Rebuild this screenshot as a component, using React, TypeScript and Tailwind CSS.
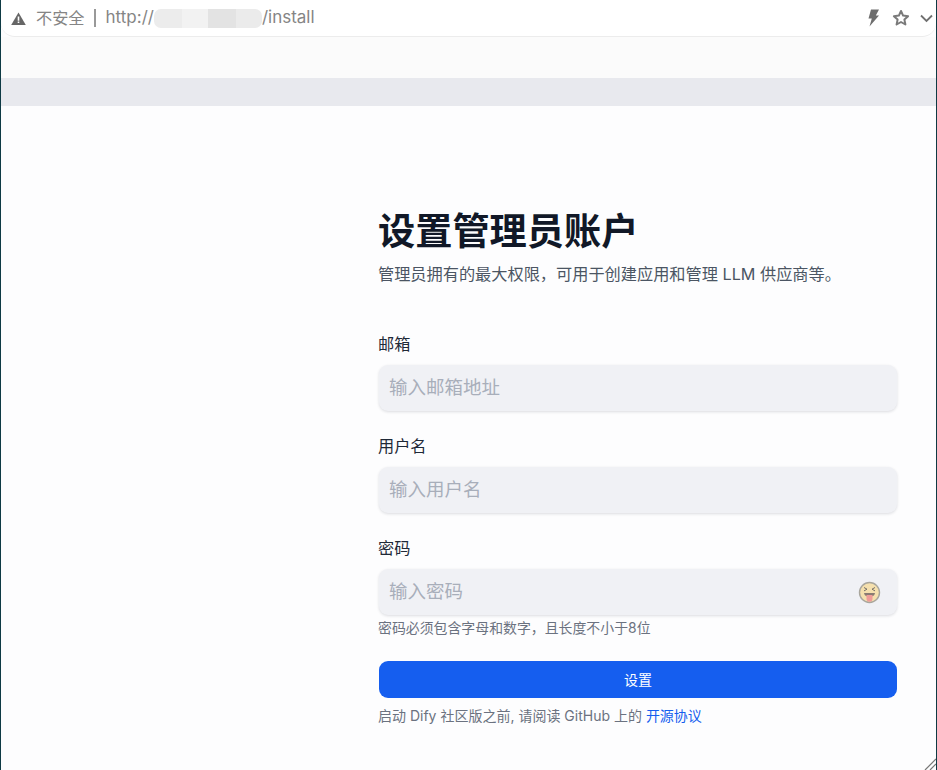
const font = { fontFamily: '"Inter","Noto Sans CJK SC",sans-serif' };

function Field({ label, placeholder, children }: { label: string; placeholder: string; children?: React.ReactNode }) {
  return (
    <div className="flex flex-col">
      <div className="h-[20px] flex items-center text-[16.2px] text-[#1f2937]">{label}</div>
      <div className="mt-[11px] ml-[1px] h-[46px] rounded-[9px] bg-[#f0f1f5] shadow-[0_1px_3px_rgba(16,24,40,0.14)] flex items-center justify-between pl-[10px] pr-[16px]">
        <span className="text-[18.5px] text-[#a8aeba]">{placeholder}</span>
        {children}
      </div>
    </div>
  );
}

function Emoji() {
  return (
    <svg width="23" height="23" viewBox="0 0 23 23" aria-hidden="true">
      <circle cx="11.5" cy="11.5" r="10" fill="#f5e0ae" stroke="#a9a69d" strokeWidth="1.4" />
      <path d="M6 6.500l3 1.700-3 1.700M17 6.500l-3 1.700 3 1.700" fill="none" stroke="#77716a" strokeWidth="1" />
      <path d="M6 12h11c-.3 1.800-1.400 2.800-2.500 3.300h-6C7.400 14.800 6.300 13.800 6 12z" fill="#8a7b72" />
      <path d="M8.500 14h6v3.800a3 3 0 0 1-6 0z" fill="#ef9c98" />
    </svg>
  );
}

export default function App() {
  return (
    <div style={font} className="w-[937px] h-[770px] overflow-hidden relative flex flex-col bg-[#fdfdfe] border-x border-[#0e3a44]">
      <div className="h-[37px] bg-white rounded-b-[14px] border-b border-[#ececec] flex items-center shrink-0 text-[#858585]">
        <svg className="ml-[10px]" width="15" height="13" viewBox="0 0 15 13" aria-hidden="true">
          <path d="M7.500 0.500L14.800 13H0.200z" fill="#666" />
          <path d="M6.700 4.500h1.600v4.300H6.700zM6.700 9.600h1.600v1.500H6.700z" fill="#fff" />
        </svg>
        <span className="ml-[10px] text-[16.2px]">不安全</span>
        <span className="ml-[9px] w-[2px] h-[18px] bg-[#999]" />
        <span className="ml-[10px] text-[17px]">http://</span>
        <span className="flex h-[19px] w-[108px] rounded-[7px] overflow-hidden">
          <span className="w-[28px] bg-[#ececec]" />
          <span className="w-[26px] bg-[#f2f2f2]" />
          <span className="w-[28px] bg-[#e3e3e3]" />
          <span className="w-[26px] bg-[#ebebeb]" />
        </span>
        <span className="text-[17px]">/install</span>
        <svg className="ml-auto" width="14" height="18" viewBox="0 0 14 18" aria-hidden="true">
          <path d="M5 0.500h8L9.800 6.500H13L3.500 17.500 5.800 9.500H2.500z" fill="#6e6e6e" />
        </svg>
        <svg className="ml-[12px]" width="18" height="18" viewBox="0 0 18 18" aria-hidden="true">
          <path d="M9 2l2.100 4.600 5 .6-3.700 3.400 1 4.900L9 13l-4.400 2.500 1-4.900L1.900 7.200l5-.6z" fill="none" stroke="#7a7a7a" strokeWidth="2" strokeLinejoin="round" />
        </svg>
        <svg className="ml-[10px] mr-[3px]" width="13" height="9" viewBox="0 0 13 9" aria-hidden="true">
          <path d="M1 1.500l5.500 5.500L12 1.500" fill="none" stroke="#707070" strokeWidth="1.800" />
        </svg>
      </div>
      <div className="h-[41px] bg-[#fbfbfb] shrink-0" />
      <div className="h-[28px] bg-[#e8e9ee] shrink-0" />
      <div className="flex-1 pl-[377px] pr-[39px] pt-[104px]">
        <h1 className="h-[44px] flex items-center text-[37.2px] font-bold text-[#111827] leading-none">设置管理员账户</h1>
        <p className="mt-[8px] h-[24px] flex items-center text-[16.2px] text-[#4b5563]">管理员拥有的最大权限，可用于创建应用和管理 LLM 供应商等。</p>
        <div className="mt-[48px] flex flex-col gap-[25px]">
          <Field label="邮箱" placeholder="输入邮箱地址" />
          <Field label="用户名" placeholder="输入用户名" />
          <Field label="密码" placeholder="输入密码"><Emoji /></Field>
        </div>
        <p className="mt-[4px] h-[18px] flex items-center text-[13.9px] text-[#6b7280]">密码必须包含字母和数字，且长度不小于8位</p>
        <div className="pl-[1px]">
          <button className="mt-[24px] w-full h-[37px] rounded-[9px] bg-[#155eef] text-white text-[14px] flex items-center justify-center">设置</button>
        </div>
        <p className="mt-[8px] h-[18px] flex items-center text-[14px] text-[#6b7280] whitespace-pre">启动 Dify 社区版之前, 请阅读 GitHub 上的 <span className="text-[#155eef]">开源协议</span></p>
      </div>
      <svg className="absolute right-0 bottom-0" width="12" height="12" viewBox="0 0 12 12" aria-hidden="true">
        <path d="M1 12L12 1M6 12l6-6" stroke="#777" strokeWidth="1.200" fill="none" />
      </svg>
    </div>
  );
}
